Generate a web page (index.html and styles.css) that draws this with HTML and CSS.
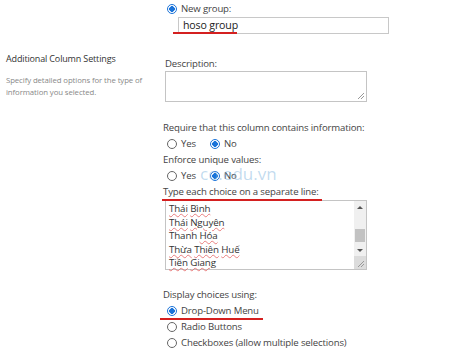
FILE: index.html
```html
<!DOCTYPE html>
<html lang="en">
<head>
    <meta charset="UTF-8">
    <meta name="viewport" content="width=device-width, initial-scale=1.0">
    <title>Column Settings</title>
    <link rel="stylesheet" href="styles.css">
</head>
<body>
    <div class="page">
        <!-- Left: section title -->
        <div class="aside">
            <div class="aside-title">Additional Column Settings</div>
            <div class="aside-desc">Specify detailed options for the type of information you selected.</div>
        </div>

        <!-- Right: fields -->
        <div class="main">
            <div class="option option-top">
                <span class="radio checked"></span>
                <span>New group:</span>
            </div>
            <div class="group-input">
                <span>hoso group</span>
                <span class="mark mark-group"></span>
            </div>

            <div class="label label-desc">Description:</div>
            <div class="textbox">
                <span class="grip"></span>
            </div>

            <div class="block">
                <div class="label">Require that this column contains information:</div>
                <div class="choice-row">
                    <span class="option"><span class="radio"></span>Yes</span>
                    <span class="option"><span class="radio checked"></span>No</span>
                </div>
                <div class="label">Enforce unique values:</div>
                <div class="choice-row">
                    <span class="option"><span class="radio"></span>Yes</span>
                    <span class="option"><span class="radio checked"></span>No</span>
                </div>
                <div class="label label-mark">
                    Type each choice on a separate line:
                    <span class="mark mark-type"></span>
                </div>
            </div>

            <div class="choices">
                <div class="choice-lines">
                    <div><span class="typo">Thái</span> <span class="typo">Bình</span></div>
                    <div><span class="typo">Thái</span> <span class="typo">Nguyên</span></div>
                    <div>Thanh <span class="typo">Hóa</span></div>
                    <div><span class="typo">Thừa</span> <span class="typo">Thiên</span> <span class="typo">Huế</span></div>
                    <div><span class="typo">Tiền</span> <span class="typo">Giang</span></div>
                </div>
                <div class="scrollbar">
                    <span class="arrow arrow-up"></span>
                    <span class="track"><span class="thumb"></span></span>
                    <span class="arrow arrow-down"></span>
                    <span class="corner"><span class="grip"></span></span>
                </div>
            </div>

            <div class="block block-display">
                <div class="label">Display choices using:</div>
                <div class="option option-wide">
                    <span class="radio checked"></span>Drop-Down Menu
                    <span class="mark mark-menu"></span>
                </div>
                <div class="option option-wide"><span class="radio"></span>Radio Buttons</div>
                <div class="option option-wide"><span class="radio"></span>Checkboxes (allow multiple selections)</div>
            </div>

            <div class="watermark">co.edu.vn</div>
        </div>
    </div>
</body>
</html>
```

FILE: styles.css
```css
/* Base */
body, html {
    margin: 0;
    padding: 0;
    background: #fff;
    font-family: 'Open Sans', 'Noto Sans', sans-serif;
    color: #444;
}

.page {
    display: grid;
    grid-template-columns: 163px 1fr;
    width: 474px;
    height: 356px;
    overflow: hidden;
}

/* Left column */
.aside {
    padding: 52px 0 0 6px;
}

.aside-title {
    font-size: 9px;
    line-height: 14px;
    color: #333;
    letter-spacing: -0.15px;
}

.aside-desc {
    margin-top: 8px;
    font-size: 7.8px;
    line-height: 12px;
    color: #888;
    width: 150px;
    letter-spacing: -0.1px;
}

/* Right column */
.main {
    position: relative;
    padding-top: 1px;
    font-size: 9.6px;
    letter-spacing: -0.15px;
}

.label {
    line-height: 16px;
    white-space: nowrap;
}

.label-desc {
    margin-top: 22px;
    padding-left: 2px;
    line-height: 15px;
}

.label-mark {
    position: relative;
}

.option {
    display: inline-flex;
    align-items: center;
    line-height: 16px;
    white-space: nowrap;
}

.option-top {
    display: flex;
    padding-left: 4px;
}

.option-wide {
    display: flex;
    position: relative;
    padding-left: 4px;
}

.choice-row {
    display: flex;
    gap: 14px;
    padding-left: 4px;
}

/* Radios */
.radio {
    box-sizing: border-box;
    width: 10px;
    height: 10px;
    margin-right: 4px;
    border: 1px solid #666;
    border-radius: 50%;
    background: #fff;
    flex-shrink: 0;
}

.radio.checked {
    border-color: #1a73d9;
    background: radial-gradient(circle, #1a73d9 0 2.6px, #fff 3px);
}

/* Inputs */
.group-input {
    position: relative;
    box-sizing: border-box;
    margin: 0 0 0 15px;
    width: 211px;
    height: 17px;
    border: 1px solid #c8c8c8;
    padding-left: 4px;
    font-size: 10.6px;
    line-height: 15px;
    color: #222;
}

.textbox {
    position: relative;
    box-sizing: border-box;
    margin-left: 2px;
    width: 202px;
    height: 31px;
    border: 1px solid #c4c4c4;
}

.grip {
    position: absolute;
    right: 2px;
    bottom: 2px;
    width: 6px;
    height: 6px;
    background: linear-gradient(135deg, transparent 45%, #999 45% 55%, transparent 55% 70%, #999 70% 80%, transparent 80%);
}

.block {
    margin-top: 18px;
}

.block-display {
    margin-top: 17px;
}

/* Choices box */
.choices {
    box-sizing: border-box;
    display: flex;
    margin-left: 2px;
    width: 202px;
    height: 70px;
    border: 1px solid #c4c4c4;
}

.choice-lines {
    flex: 1;
    padding: 1px 0 0 3px;
    font-size: 9.8px;
    line-height: 13.6px;
    color: #333;
}

.typo {
    text-decoration: underline wavy rgba(225, 80, 80, 0.7);
    text-decoration-thickness: 0.5px;
    text-underline-offset: 1px;
}

.scrollbar {
    display: flex;
    flex-direction: column;
    width: 12px;
    background: #f0f0f0;
}

.arrow {
    height: 12px;
    display: flex;
    align-items: center;
    justify-content: center;
}

.arrow::before {
    content: "";
    border-left: 3px solid transparent;
    border-right: 3px solid transparent;
}

.arrow-up::before {
    border-bottom: 3px solid #555;
}

.arrow-down::before {
    border-top: 3px solid #555;
}

.track {
    flex: 1;
    display: flex;
    flex-direction: column;
    justify-content: flex-end;
    padding: 0 1px 2px;
}

.thumb {
    height: 13px;
    background: #c2c2c2;
}

.corner {
    position: relative;
    height: 13px;
    background: #dcdcdc;
}

/* Red annotation marks */
.mark {
    position: absolute;
    height: 2px;
    background: #d42020;
}

.mark-group {
    left: -6px;
    top: 14px;
    width: 64px;
}

.mark-type {
    left: -1px;
    top: 15px;
    width: 160px;
}

.mark-menu {
    left: -3px;
    top: 15px;
    width: 103px;
}

/* Watermark over the form */
.watermark {
    position: absolute;
    left: 37px;
    top: 162px;
    font-size: 17px;
    letter-spacing: 0;
    color: rgba(120, 175, 220, 0.45);
    pointer-events: none;
}
```
